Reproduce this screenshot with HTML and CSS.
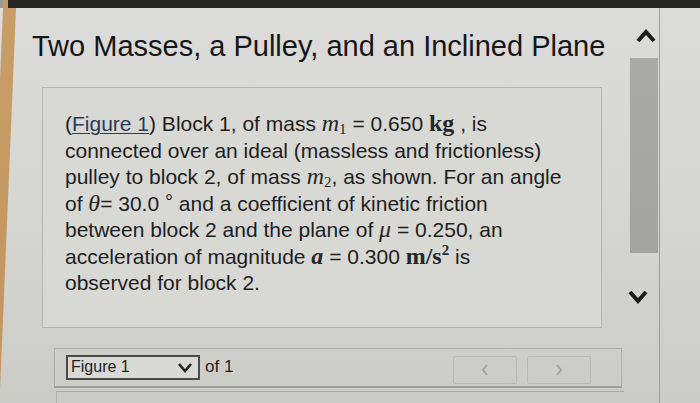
FILE: index.html
```html
<!DOCTYPE html>
<html>
<head>
<meta charset="utf-8">
<link rel="stylesheet" href="styles.css">
</head>
<body>
<div class="screen">
  <div class="top"><div class="top-edge"></div><div class="topbar"></div></div>
  <div class="row">
    <div class="edge"><div class="stripe"></div></div>
    <div class="content">
      <h1 class="title">Two Masses, a Pulley, and an Inclined Plane</h1>
      <div class="problem">
        <div class="line">(<a class="link">Figure 1</a>) Block 1, of mass <i class="mv">m</i><sub class="sb">1</sub> = 0.650 <span class="unit">kg</span> , is</div>
        <div class="line">connected over an ideal (massless and frictionless)</div>
        <div class="line">pulley to block 2, of mass <i class="mv">m</i><sub class="sb">2</sub>, as shown. For an angle</div>
        <div class="line">of <i class="mv">θ</i>= 30.0 <sup class="deg">°</sup> and a coefficient of kinetic friction</div>
        <div class="line">between block 2 and the plane of <i class="mv">μ</i> = 0.250, an</div>
        <div class="line">acceleration of magnitude <i class="mv ab">a</i> = 0.300 <span class="unit">m/s<sup class="sq">2</sup></span> is</div>
        <div class="line">observed for block 2.</div>
      </div>
      <div class="figbar">
        <div class="select">
          <span>Figure 1</span>
          <svg class="sel-chev" width="16" height="11" viewBox="0 0 16 11"><polyline points="2,2 8,9 14,2" fill="none" stroke="#222" stroke-width="2.6" stroke-linejoin="miter"/></svg>
        </div>
        <span class="of">of 1</span>
        <div class="spacer"></div>
        <div class="nav"><svg width="10" height="14" viewBox="0 0 10 14"><polyline points="7,2 3,7 7,12" fill="none" stroke="#a4a4a0" stroke-width="2"/></svg></div>
        <div class="nav"><svg width="10" height="14" viewBox="0 0 10 14"><polyline points="3,2 7,7 3,12" fill="none" stroke="#a4a4a0" stroke-width="2"/></svg></div>
      </div>
      <div class="figarea"></div>
    </div>
    <div class="scroll">
      <svg class="up" width="22" height="16" viewBox="0 0 22 16"><polyline points="3,13 11,4 19,13" fill="none" stroke="#1c1c1c" stroke-width="4"/></svg>
      <div class="thumb"></div>
      <svg class="down" width="22" height="16" viewBox="0 0 22 16"><polyline points="3,3 11,12 19,3" fill="none" stroke="#1c1c1c" stroke-width="4"/></svg>
    </div>
    <div class="gutter"></div>
  </div>
</div>
</body>
</html>
```
FILE: styles.css
```css
html, body {
  margin: 0;
  padding: 0;
}
body {
  width: 700px;
  height: 403px;
  overflow: hidden;
  background: linear-gradient(to bottom, #dcdcdb 0%, #d6d6d3 50%, #cbcbc7 100%);
  font-family: "Liberation Sans", Arial, sans-serif;
  color: #222;
}
.screen {
  display: flex;
  flex-direction: column;
  height: 403px;
}
.top {
  display: flex;
  height: 8px;
}
.top-edge {
  width: 8px;
  background: linear-gradient(to right, #9a9a96 3px, #c49a62 3px);
}
.topbar {
  flex: 1;
  background: #262626;
}
.row {
  display: flex;
  flex: 1;
}
.edge {
  width: 16px;
  flex: none;
}
.stripe {
  margin-left: 3px;
  width: 13px;
  height: 100%;
  background: linear-gradient(to bottom, #c89d66, #c39560);
  transform: skewX(-2.4deg);
  transform-origin: top left;
}
.content {
  width: 608px;
  flex: none;
  display: flex;
  flex-direction: column;
}
.title {
  margin: 21px 0 0 16px;
  font-size: 29px;
  line-height: 34px;
  font-weight: normal;
  color: #161616;
  white-space: nowrap;
}
.problem {
  margin: 24px 0 0 26px;
  width: 516px;
  padding: 23px 20px 30px 22px;
  border: 1px solid #b4b4b1;
  background: #d8d8d5;
}
.line {
  font-size: 21px;
  line-height: 26.5px;
  height: 26.5px;
  white-space: nowrap;
  color: #1e1e1e;
}
.link {
  color: #2c3a58;
  text-decoration: underline;
  text-decoration-thickness: 1px;
  text-underline-offset: 2px;
}
.mv {
  font-family: "Liberation Serif", "Times New Roman", serif;
  font-style: italic;
  font-size: 24px;
  line-height: 1;
  color: #262626;
}
.ab {
  font-weight: bold;
}
.sb {
  font-family: "Liberation Serif", serif;
  font-size: 15px;
  vertical-align: -3px;
  line-height: 0;
}
.unit {
  font-family: "Liberation Serif", "Times New Roman", serif;
  font-size: 24px;
  line-height: 1;
  font-weight: bold;
  color: #262626;
}
.sq {
  font-size: 15px;
  vertical-align: 9px;
  line-height: 0;
}
.deg {
  font-size: 20px;
  vertical-align: 2px;
  line-height: 0;
}
.figbar {
  margin: 20px 2px 0 38px;
  height: 40px;
  box-sizing: border-box;
  border: 1px solid #adadaa;
  border-bottom: 2px solid #9c9c99;
  display: flex;
  align-items: center;
  padding: 0 30px 0 11px;
}
.select {
  width: 134px;
  height: 25px;
  box-sizing: border-box;
  border: 2px solid #4b4b4b;
  display: flex;
  align-items: center;
  justify-content: space-between;
  padding: 0 5px 0 3px;
  font-size: 16px;
  color: #1f1f1f;
  background: #d9d9d6;
}
.sel-chev {
  display: block;
}
.of {
  margin-left: 5px;
  font-size: 17px;
  color: #1f1f1f;
}
.spacer {
  flex: 1;
}
.nav {
  width: 64px;
  height: 28px;
  box-sizing: border-box;
  border: 1px solid #b9b9b5;
  border-radius: 2px;
  display: flex;
  align-items: center;
  justify-content: center;
  margin-left: 10px;
  margin-top: 5px;
}
.figarea {
  margin: 3px 0 0 40px;
  flex: 1;
  border-top: 1px solid #a9a9a6;
  border-left: 1px solid #b4b4b1;
}
.scroll {
  width: 35px;
  flex: none;
  border-right: 1px solid #9d9d9a;
  display: flex;
  flex-direction: column;
  align-items: center;
  padding-top: 20px;
}
.up {
  display: block;
  margin-left: 8px;
}
.thumb {
  margin-top: 14px;
  width: 28px;
  height: 195px;
  background: linear-gradient(to bottom, #a9a9a7, #a3a3a0);
  margin-left: 4px;
}
.down {
  display: block;
  margin-top: 36px;
  margin-right: 8px;
}
.gutter {
  flex: 1;
}
```
